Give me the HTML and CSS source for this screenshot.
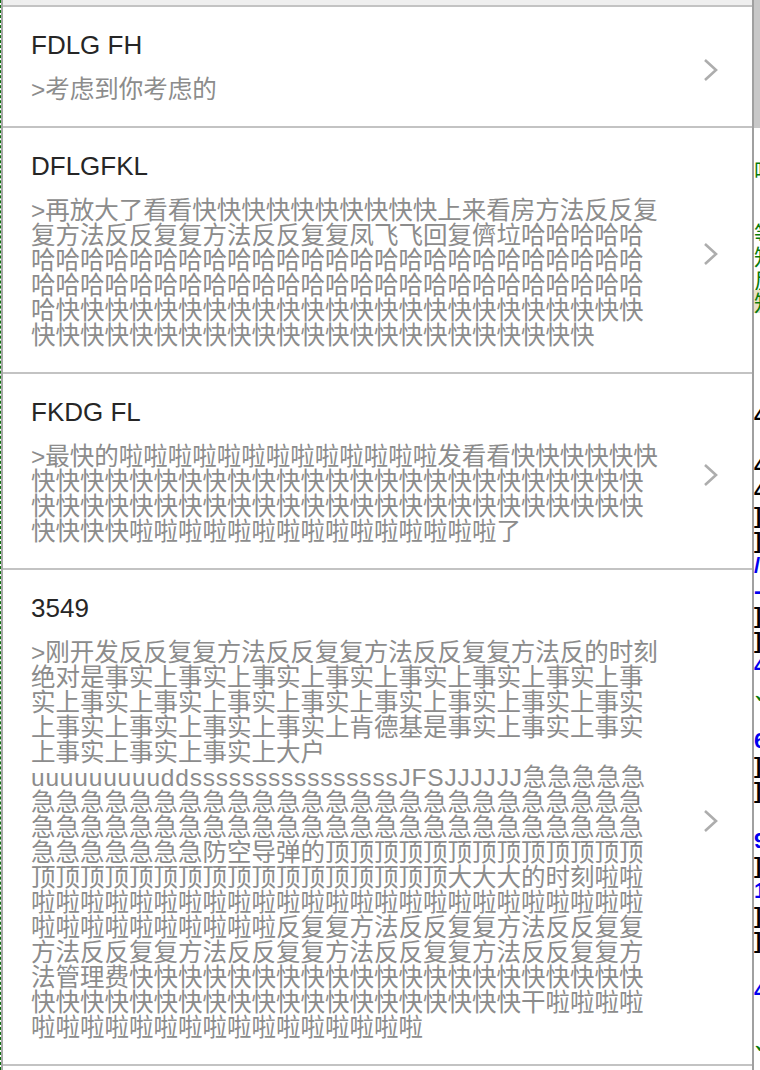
FILE: index.html
```html
<!DOCTYPE html>
<html lang="zh">
<head>
<meta charset="utf-8">
<title>List</title>
<link rel="stylesheet" href="styles.css">
</head>
<body>
<div class="screen">
  <div class="panel">
    <div class="prev"></div>
    <ul class="list">
      <li class="item">
        <div class="text">
          <div class="title">FDLG FH</div>
          <div class="sub">&gt;考虑到你考虑的</div>
        </div>
        <svg class="chev" viewBox="0 0 15 24"><polyline points="2,2 13,12 2,22"/></svg>
      </li>
      <li class="item">
        <div class="text">
          <div class="title">DFLGFKL</div>
          <div class="sub">&gt;再放大了看看快快快快快快快快快快上来看房方法反反复复方法反反复复方法反反复复凤飞飞回复儕垃哈哈哈哈哈哈哈哈哈哈哈哈哈哈哈哈哈哈哈哈哈哈哈哈哈哈哈哈哈哈哈哈哈哈哈哈哈哈哈哈哈哈哈哈哈哈哈哈哈哈哈哈哈哈哈哈快快快快快快快快快快快快快快快快快快快快快快快快快快快快快快快快快快快快快快快快快快快快快快快</div>
        </div>
        <svg class="chev" viewBox="0 0 15 24"><polyline points="2,2 13,12 2,22"/></svg>
      </li>
      <li class="item">
        <div class="text">
          <div class="title">FKDG FL</div>
          <div class="sub">&gt;最快的啦啦啦啦啦啦啦啦啦啦啦啦啦发看看快快快快快快快快快快快快快快快快快快快快快快快快快快快快快快快快快快快快快快快快快快快快快快快快快快快快快快快快快快快快啦啦啦啦啦啦啦啦啦啦啦啦啦啦啦了</div>
        </div>
        <svg class="chev" viewBox="0 0 15 24"><polyline points="2,2 13,12 2,22"/></svg>
      </li>
      <li class="item">
        <div class="text">
          <div class="title">3549</div>
          <div class="sub">&gt;刚开发反反复复方法反反复复方法反反复复方法反的时刻绝对是事实上事实上事实上事实上事实上事实上事实上事实上事实上事实上事实上事实上事实上事实上事实上事实上事实上事实上事实上事实上肯德基是事实上事实上事实上事实上事实上事实上大户<span class="latin">uuuuuuuuuddssssssssssssssssJFSJJJJJJ</span>急急急急急急急急急急急急急急急急急急急急急急急急急急急急急急急急急急急急急急急急急急急急急急急急急急急急急急急急急急急急急急防空导弹的顶顶顶顶顶顶顶顶顶顶顶顶顶顶顶顶顶顶顶顶顶顶顶顶顶顶顶顶顶顶大大大的时刻啦啦啦啦啦啦啦啦啦啦啦啦啦啦啦啦啦啦啦啦啦啦啦啦啦啦啦啦啦啦啦啦啦啦啦啦啦反复复方法反反复复方法反反复复方法反反复复方法反反复复方法反反复复方法反反复复方法管理费快快快快快快快快快快快快快快快快快快快快快快快快快快快快快快快快快快快快快快快快快干啦啦啦啦啦啦啦啦啦啦啦啦啦啦啦啦啦啦啦啦</div>
        </div>
        <svg class="chev" viewBox="0 0 15 24"><polyline points="2,2 13,12 2,22"/></svg>
      </li>
    </ul>
  </div>
  <div class="behind">
    <div class="behind-top"></div>
    <div class="bgap0"></div>
    <div class="bline green">哇</div>
    <div class="bgap1"></div>
    <div class="bline green">等</div>
    <div class="bline green">知</div>
    <div class="bline green">反</div>
    <div class="bline green mark">知</div>
    <div class="bgap2"></div>
    <div class="bl black">4</div>
    <div class="bl"></div>
    <div class="bl black">4</div>
    <div class="bl black">4</div>
    <div class="bl black">]</div>
    <div class="bl black">]</div>
    <div class="bl blue">/</div>
    <div class="bl blue">-</div>
    <div class="bl black">]</div>
    <div class="bl black">]</div>
    <div class="bl blue">4</div>
    <div class="bl green">、</div>
    <div class="bl"></div>
    <div class="bl blue">6</div>
    <div class="bl black">]</div>
    <div class="bl black">]</div>
    <div class="bl"></div>
    <div class="bl blue">9</div>
    <div class="bl black">]</div>
    <div class="bl blue">1</div>
    <div class="bl black">]</div>
    <div class="bl black">]</div>
    <div class="bl"></div>
    <div class="bl blue">4</div>
    <div class="bl"></div>
    <div class="bl green">、</div>
  </div>
</div>
</body>
</html>
```

FILE: styles.css
```css
html, body {
  margin: 0;
  padding: 0;
}
body {
  width: 760px;
  height: 1070px;
  overflow: hidden;
  background: #ffffff;
}
.screen {
  display: flex;
  height: 1070px;
  border-left: 1px dashed #0c6e0c;
}
.panel {
  flex: none;
  width: 749px;
  border-left: 2px solid #a8a8a8;
  border-right: 2px solid #a0a0a0;
  background: #ffffff;
}
.prev {
  height: 5px;
  background: #efefef;
  border-bottom: 2px solid #c3c3c3;
}
.list {
  list-style: none;
  margin: 0;
  padding: 0;
}
.item {
  display: flex;
  align-items: center;
  justify-content: space-between;
  padding: 23px 34px 24px 28px;
  border-bottom: 2px solid #c3c3c3;
}
.text {
  width: 631px;
}
.title {
  font: 26px/30px "Liberation Sans", Arial, sans-serif;
  color: #262626;
}
.sub {
  margin-top: 17px;
  font: 24.5px/25px "Liberation Sans", "Noto Sans CJK SC", sans-serif;
  color: #8c8c8c;
}
.latin {
  letter-spacing: 0.8px;
}
.chev {
  flex: none;
  width: 15px;
  height: 24px;
  margin-top: 8px;
}
.chev polyline {
  fill: none;
  stroke: #adadad;
  stroke-width: 2.6;
}
.behind {
  flex: 1;
  overflow: hidden;
  display: flex;
  flex-direction: column;
  background: #ffffff;
  font-family: "Noto Sans CJK SC", sans-serif;
}
.behind-top {
  flex: none;
  height: 128px;
  background: #c8c8c8;
}
.bgap0 {
  flex: none;
  height: 30px;
}
.bline {
  flex: none;
  height: 23px;
  font-size: 22px;
  line-height: 23px;
  white-space: nowrap;
}
.bgap1 {
  flex: none;
  height: 40px;
}
.bgap2 {
  flex: none;
  height: 90px;
}
.bl {
  flex: none;
  height: 25px;
  font: bold 22px/25px "Liberation Sans", sans-serif;
  white-space: nowrap;
}
.green { color: #0a7a0a; }
.black { color: #000000; }
.blue { color: #0000ee; }
.mark { background: #e9e1c6; }
```
